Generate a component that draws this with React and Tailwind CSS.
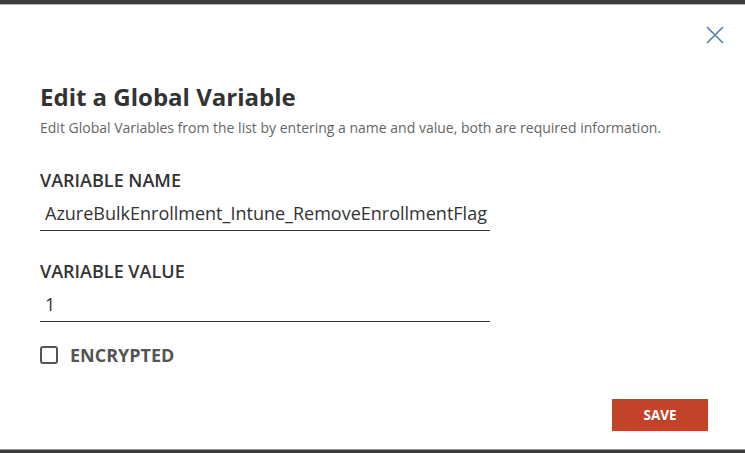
export default function App() {
  return (
    <div className="w-[745px] h-[453px] flex flex-col bg-[#3d3d3d] overflow-hidden" style={{ fontFamily: '"Open Sans", sans-serif' }}>
      <div className="h-[4px] shrink-0" />
      <div className="h-[1px] shrink-0 bg-[#b5b5b5]" />
      <div className="flex-1 bg-white relative px-10 flex flex-col">
        <button className="absolute right-[20px] top-[20px] text-[#4f7ea6]">
          <svg width="20" height="20" viewBox="0 0 20 20" fill="none" stroke="currentColor" strokeWidth="1.6">
            <path d="M2 2 L18 18 M18 2 L2 18" />
          </svg>
        </button>
        <h1 className="mt-[76px] text-[24px] leading-[32px] font-bold text-[#333333]">Edit a Global Variable</h1>
        <p className="mt-[5px] text-[14px] leading-[20px] text-[#666666] whitespace-nowrap">
          Edit Global Variables from the list by entering a name and value, both are required information.
        </p>
        <label className="mt-[30px] text-[18px] leading-[24px] font-semibold text-[#333333]">VARIABLE NAME</label>
        <div className="mt-[8px] w-[450px] border-b border-[#333333] pl-[5px] pb-[4px] text-[18px] leading-[26px] text-[#333333] whitespace-nowrap overflow-hidden">
          AzureBulkEnrollment_Intune_RemoveEnrollmentFlag
        </div>
        <label className="mt-[28px] text-[18px] leading-[24px] font-semibold text-[#333333]">VARIABLE VALUE</label>
        <div className="mt-[8px] w-[450px] border-b border-[#333333] pl-[5px] pb-[4px] text-[18px] leading-[26px] text-[#333333]">1</div>
        <div className="mt-[21px] flex items-center gap-[12px]">
          <div className="w-[18px] h-[18px] border-2 border-[#555555] rounded-[3px]" />
          <span className="text-[18px] leading-[24px] font-bold text-[#555555]">ENCRYPTED</span>
        </div>
        <div className="mt-[32px] flex justify-end">
          <button className="w-[96px] h-[32px] mr-[-3px] bg-[#c0432a] text-white text-[13.5px] font-bold">SAVE</button>
        </div>
      </div>
      <div className="h-[1px] shrink-0 bg-[#9a9a9a]" />
      <div className="h-[3px] shrink-0" />
    </div>
  );
}
